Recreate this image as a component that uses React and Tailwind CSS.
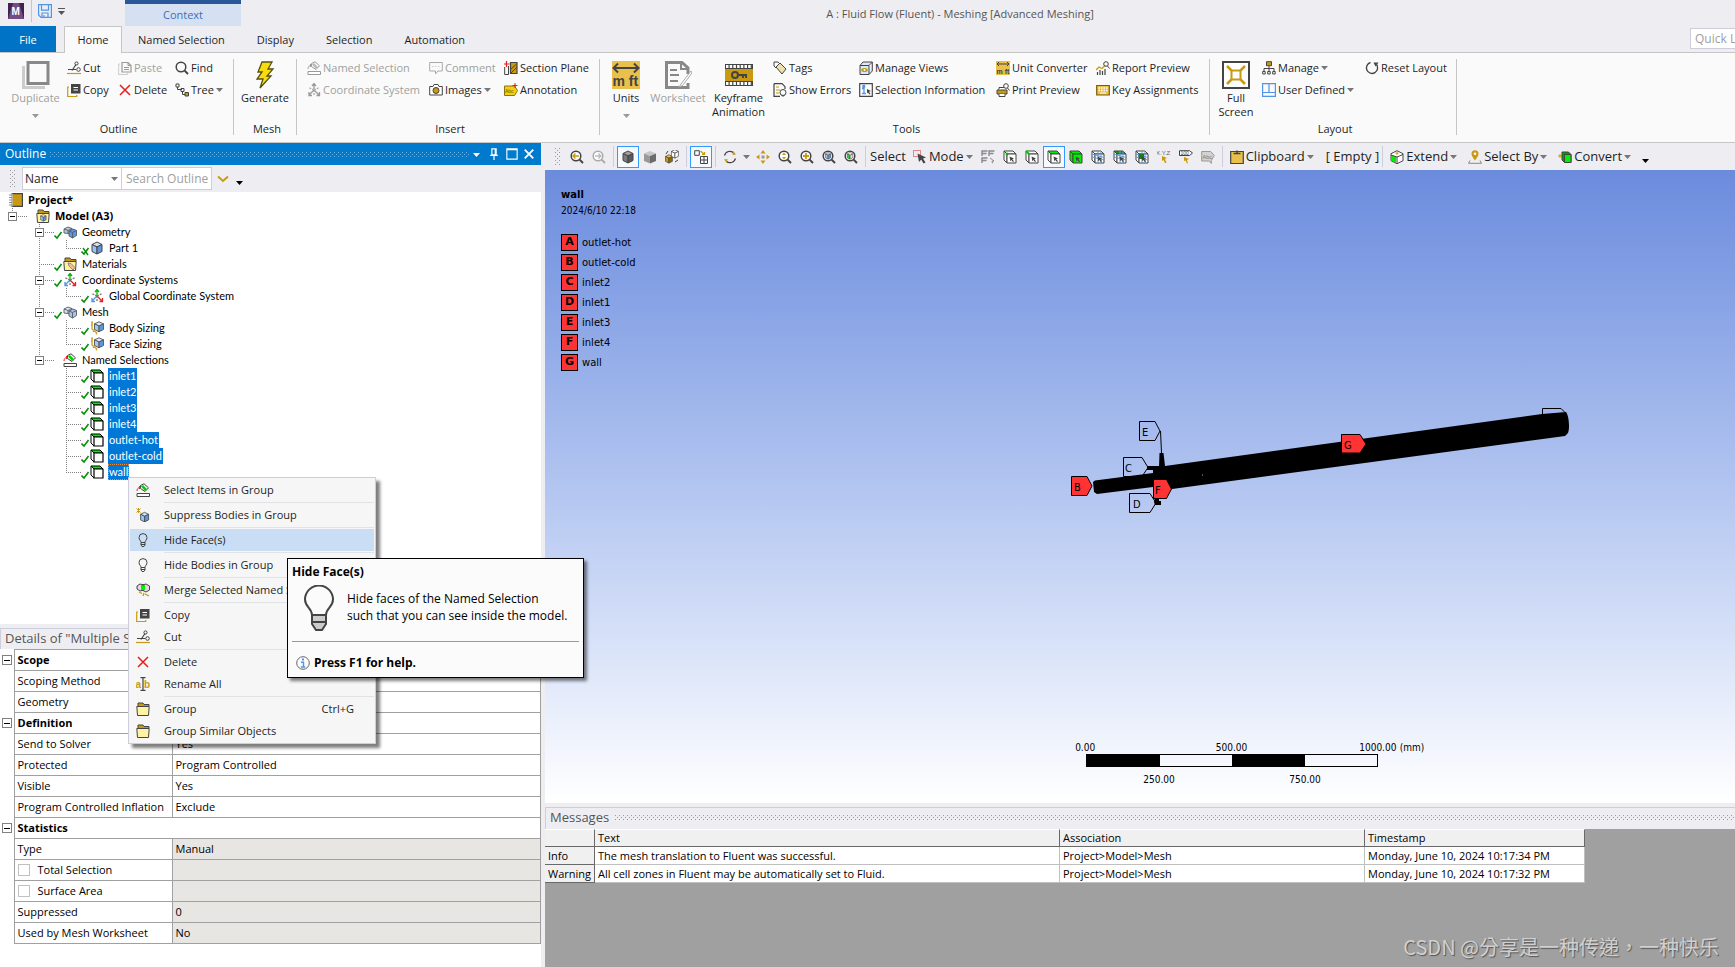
import React, { useId, useState } from "react";

const DARK = "#444444";
const GOLD = "#c99a11";
const BLUE = "#4f95e8";
const GREEN = "#00f000";

/* ---------- small drawing helpers ---------- */

const Svg = ({ size = 14, className = "", children }) => (
  <svg
    width={size}
    height={size}
    viewBox={`0 0 ${size > 20 ? 28 : 14} ${size > 20 ? 28 : 14}`}
    fill="none"
    className={`shrink-0 ${className}`}
    aria-hidden="true"
  >
    {children}
  </svg>
);

const Dots = ({ className = "", color = "#9a9a9e" }) => {
  const id = useId();
  return (
    <svg className={className} aria-hidden="true">
      <defs>
        <pattern id={id} width="4" height="4" patternUnits="userSpaceOnUse">
          <rect width="1" height="1" fill={color} />
          <rect x="2" y="2" width="1" height="1" fill={color} />
        </pattern>
      </defs>
      <rect width="100%" height="100%" fill={`url(#${id})`} />
    </svg>
  );
};

const Caret = ({ color = "#777777", className = "" }) => (
  <svg width="7" height="4" viewBox="0 0 7 4" className={`shrink-0 ${className}`} aria-hidden="true">
    <path d="M0 0h7L3.500 4z" fill={color} />
  </svg>
);

const Cube = ({ top = "#cfe0f7", left = "#9fc2ee", right = "#5b96e0" }) => (
  <g stroke={DARK} strokeWidth="1" strokeLinejoin="round">
    <path d="M7 1l5 2.500-5 2.500-5-2.500z" fill={top} />
    <path d="M2 3.500l5 2.500v7l-5-2.500z" fill={left} />
    <path d="M12 3.500l-5 2.500v7l5-2.500z" fill={right} />
  </g>
);

const TwoCubes = ({ a, b }) => (
  <g stroke="#555b66" strokeWidth="0.900" strokeLinejoin="round">
    <path d="M1 4l4-2 4 1.500v6L5 8.500 1 8z" fill={a} />
    <path d="M6 6l4-2 3.500 1.500v5L9.500 13 6 11z" fill={b} />
    <path d="M1 4l4 1.500V8.500M5 5.500L9 3.500M6 6l3.500 1.500V13M9.500 7.500l4-2" />
  </g>
);

// box used for vertex / edge / face / body filters
const Box = ({ top = "white", front = "white", left = "white", grid, children }) => (
  <g strokeLinejoin="round">
    <path d="M1 1h9l3 3H4z" fill={top} stroke={DARK} />
    <path d="M1 1v9l3 3V4z" fill={left} stroke={DARK} />
    <path d="M4 4h9v9H4z" fill={front} stroke={DARK} />
    {grid && <path d="M7 1v12M10 1v12M1 4l12 3.500M1 7l12 3" stroke="#5b96e0" />}
    {children}
  </g>
);

const Pointer = () => <path d="M6.500 6.500l4.500 2-1.700.8 1.700 2-1 .7-1.600-2-1 1.200z" fill={DARK} />;

const Magnifier = ({ color = DARK, children }) => (
  <>
    <circle cx="6" cy="6" r="4.800" stroke={color} strokeWidth="1.500" fill="white" />
    <path d="M9.600 9.600L13 13" stroke={color} strokeWidth="2" />
    {children}
  </>
);

const Axes = ({ up = "#00b400", left = "#4f95e8", right = "#e82020", other = "#777777" }) => (
  <g strokeWidth="1.300">
    <path d="M7 7V1M5 3l2-2.500L9 3" stroke={up} />
    <path d="M7 7l-5 5M2 9v3.500h3" stroke={left} />
    <path d="M7 7l5 5M12.500 9v3.500h-3" stroke={right} />
    <path d="M7 7v6M7 7L1.500 4.500M7 7l5.500-2.500" stroke={other} strokeDasharray="2 1" />
  </g>
);

const NamedSel = ({ fill = "#00d000", arrow = "#e82020", line = DARK }) => (
  <>
    <path d="M4.500 2.500L8 .8l4.500 4-3.500 3.700-4.500-3z" fill="white" stroke={line} />
    <path d="M5 3.500l4 4.500 2-2L7 2z" fill={fill} />
    <path d="M1 10.500h12.500v3H1z" fill="white" stroke={line} />
    <path d="M1 8c0-2 1-3.500 3-3.500M3 3l1.500 1.500L3 6" stroke={arrow} />
  </>
);

const Bulb = () => (
  <g stroke={DARK} strokeWidth="1">
    <path d="M5 9.500C5 7.500 3 7 3 4.600a4 4 0 018 0C11 7 9 7.500 9 9.500z" />
    <path d="M5 9.500h4v2.500l-1 1.500H6l-1-1.500zM5 11.500h4" />
  </g>
);

const FolderBase = ({ children }) => (
  <>
    <path d="M2 4V1h5l1 1.500h5V4" fill={GOLD} stroke={DARK} />
    <path d="M.8 4.500h12.400l-.7 9H1.500z" fill="#fff3a3" stroke={DARK} />
    {children}
  </>
);

const Sizing = () => (
  <>
    <path d="M1 1h2M1 4h2M2 1v7l5 4M4 9l-1 2M7 11.500l-1 2" stroke={GOLD} strokeWidth="1.200" />
    <g stroke="#555555" strokeWidth="0.900" strokeLinejoin="round">
      <path d="M9 .8l4.500 2L9 5 4.500 2.800z" fill="#dce8f8" />
      <path d="M4.500 2.800L9 5v5.800L4.500 8.500z" fill="#a6c8f0" />
      <path d="M13.500 2.800L9 5v5.800l4.500-2.300z" fill="#5b96e0" />
    </g>
  </>
);

const ICONS = {
  cut: (
    <>
      <path d="M1 8.500h8M5 9.500L9 3.500" stroke={DARK} strokeWidth="1.200" />
      <circle cx="9.500" cy="2.500" r="1.600" stroke={DARK} />
      <circle cx="11.500" cy="8.500" r="1.800" stroke={DARK} />
      <path d="M0 12.500h14" stroke={GOLD} strokeWidth="1.200" />
    </>
  ),
  copy: (
    <>
      <path d="M4 1h9.500v9.500H4z" fill={DARK} />
      <path d="M6.500 4.500h4.500M6.500 7h4.500" stroke="white" />
      <path d="M2 4H.7v9.500h9V12" stroke={GOLD} strokeWidth="1.200" />
    </>
  ),
  paste: (
    <>
      <path d="M4 1.500h6l3 3V11H4z" stroke="#999999" strokeWidth="1.200" />
      <path d="M10 1.500v3h3M6 6.500h5M6 8.500h5" stroke="#999999" />
      <path d="M2 3H.7v10.500h9V12" stroke="#cccccc" />
    </>
  ),
  delete: <path d="M2 2l10 10M12 2L2 12" stroke="#e81b1b" strokeWidth="1.500" />,
  find: (
    <>
      <circle cx="6" cy="6" r="4.800" stroke={DARK} strokeWidth="1.500" />
      <path d="M9.600 9.600L13 13" stroke={DARK} strokeWidth="2" />
    </>
  ),
  tree: (
    <>
      <path d="M1 1h3v3H1zM2.500 4v2.500H7M6 5.500h3v3H6zM7.500 8.500v3H10" stroke={DARK} />
      <path d="M10 9.500h3.500v3.500H10z" fill={GOLD} stroke={DARK} />
    </>
  ),
  namedSelGrey: <NamedSel fill="#bbbbbb" arrow="#999999" line="#999999" />,
  csGrey: <Axes up="#999999" left="#999999" right="#999999" other="#aaaaaa" />,
  comment: (
    <>
      <path d="M.7 1.500h12.600V10H9l-2.500 3v-3H.7z" stroke="#aaaaaa" />
      <path d="M3 5.500h8" stroke="#cccccc" strokeDasharray="1.500 1.500" />
    </>
  ),
  images: (
    <>
      <path d="M.7 3.500H4L5 1.500h4l1 2h3.300V12H.7z" fill="white" stroke={DARK} />
      <circle cx="7" cy="7.500" r="3" fill={GOLD} stroke={DARK} />
    </>
  ),
  section: (
    <>
      <path d="M6.500 1.500h6.500v11H6.500z" fill={GOLD} stroke={DARK} strokeWidth="1.200" />
      <path d="M7 8l5.500-5M7 12l6-6" stroke={DARK} />
      <path d="M4.500 5v8.500H.7V6" stroke={DARK} />
      <path d="M2.500 0v6M0 3h5.500" stroke="#e81b1b" strokeWidth="1.200" />
    </>
  ),
  annotation: (
    <>
      <path d="M.5 3h10l3 4.500-3 5H.5z" fill="#f2cf12" stroke="#8d7310" />
      <text x="1" y="10" fontSize="5" fill="#6b5709" fontFamily="Liberation Sans">Abc</text>
      <path d="M11 0v5M8.500 2.500h5" stroke="#e81b1b" />
    </>
  ),
  tags: (
    <>
      <path d="M1 1h4l2 2-4 4-2-2z" fill="white" stroke={DARK} />
      <path d="M3 6l4-4 6 6-4 5z" fill="#f0dfae" stroke={DARK} />
    </>
  ),
  errors: (
    <>
      <path d="M1 .7h8l3 3V6M7 13.300H1V.7" stroke={DARK} strokeWidth="1.200" />
      <path d="M3 4h3M3 7h4M3 10h3" stroke={GOLD} />
      <circle cx="10" cy="9.500" r="3" stroke={DARK} />
      <path d="M8.500 12l1.500 1.500 1.500-1.500" stroke={DARK} />
    </>
  ),
  views: (
    <>
      <path d="M1 4.500h9v9H1zM1 4.500l3-3.500h9.300L10 4.500M13.300 1v9L10 13.500" fill="#dbe8f8" stroke={DARK} />
      <ellipse cx="5.500" cy="9" rx="3.300" ry="2" fill={GOLD} />
      <circle cx="5.500" cy="9" r="1" fill="white" />
    </>
  ),
  selInfo: (
    <>
      <path d="M.7.7h12.600v12.600H.7z" fill="white" stroke={DARK} strokeWidth="1.200" />
      <path d="M3 5.500h2v5M3 10.500h4M4 2.500h1.500v1.500H4z" stroke={BLUE} strokeWidth="1.300" />
      <path d="M8 6l4 2-2 .7 1.500 2.300-1 .5L9 9.500 8 10.500z" fill={DARK} />
    </>
  ),
  unitConv: (
    <>
      <path d="M0 0h14v14H0z" fill="#e8c04a" />
      <path d="M1 3h12M3 1L1 3l2 2M11 1l2 2-2 2" stroke={DARK} />
      <text x="0.500" y="12.500" fontSize="7" fontWeight="700" fill={DARK} fontFamily="Liberation Sans">m ft</text>
    </>
  ),
  print: (
    <>
      <path d="M1 7h10v4H1z" fill={GOLD} stroke={DARK} />
      <path d="M3 7V4.500h5M3 11v2.500h6V11" fill="white" stroke={DARK} />
      <circle cx="10" cy="3" r="2.300" fill="white" stroke={DARK} />
      <path d="M11.500 5l2 2.500" stroke={DARK} />
    </>
  ),
  report: (
    <>
      <path d="M1.500 11v3M4 9v5M6.500 10v4M9 8v6" stroke={DARK} strokeWidth="1.200" />
      <path d="M0 9l3-3 3 1.500 3-3" stroke={GOLD} strokeWidth="1.300" />
      <circle cx="10" cy="3" r="2.300" stroke={DARK} />
      <path d="M11.500 5l2 2.500" stroke={DARK} />
    </>
  ),
  keys: (
    <>
      <path d="M.7 2.500h12.600v9.500H.7z" fill="#e8c04a" stroke="#7a5d08" strokeWidth="1.200" />
      <path d="M2.500 5h9M2.500 7.500h9" stroke="white" strokeWidth="1.300" strokeDasharray="1.500 1" />
      <path d="M4 10h6" stroke="white" />
    </>
  ),
  manage: (
    <>
      <path d="M4.500.7h5v4h-5z" fill={GOLD} stroke={DARK} />
      <path d="M7 5v5M2 10V7.500h10V10" stroke={DARK} />
      <path d="M.7 10.500h2.500V13H.7zM5.700 10.500h2.500V13H5.700zM10.700 10.500h2.500V13h-2.500z" stroke={DARK} />
    </>
  ),
  userDef: <path d="M.6.600h12.800v12.800H.6zM.6 9.500h12.800M7 .600v9M9 9.500" stroke={BLUE} strokeWidth="1.200" />,
  reset: (
    <>
      <path d="M5.500 1.500a5.600 5.600 0 106 2" stroke={DARK} strokeWidth="1.400" />
      <path d="M8.500 1.500l5 0-3 4z" fill={DARK} />
    </>
  ),
  project: (
    <>
      <path d="M3 .6h10.400v12.800H3z" fill={GOLD} stroke={DARK} strokeWidth="1.200" />
      <path d="M3 .6v12.800" stroke="white" />
      <path d="M0 2h3M0 4.500h3M0 7h3M0 9.500h3M0 12h3" stroke="#888888" />
    </>
  ),
  model: (
    <FolderBase>
      <g transform="translate(3.500 5) scale(.55)">
        <Cube />
      </g>
    </FolderBase>
  ),
  geometry: <TwoCubes a="#b9c9de" b="#5b96e0" />,
  part: <Cube />,
  materials: (
    <FolderBase>
      <path d="M5 6l3 .5 4 4-2 2.500-4-4z" fill="#f4bf8c" stroke="#777777" strokeWidth="0.800" />
    </FolderBase>
  ),
  cs: <Axes />,
  mesh: <TwoCubes a="#dbe6f4" b="#a9c4e4" />,
  sizing: <Sizing />,
  named: <NamedSel />,
  face: (
    <g strokeLinejoin="round">
      <path d="M1 1h9l3 3H4z" fill={GREEN} stroke="black" />
      <path d="M1 1v9l3 3" stroke="black" />
      <path d="M4 4h9v9H4z" fill="white" stroke="black" strokeWidth="1.200" />
    </g>
  ),
  suppress: (
    <>
      <path d="M.5.500l4 4M4.500.500l-4 4M2.500 0v5" stroke={GOLD} />
      <g transform="translate(3 3.500) scale(.8)">
        <Cube />
      </g>
    </>
  ),
  bulb: <Bulb />,
  merge: (
    <>
      <path d="M1 3l3-2 4 1v5L4 8 1 6zM6 2l4-1 3.500 2v4L10 9 6 7z" fill="#dddddd" stroke={DARK} />
      <path d="M5 3l4 0v4H5z" fill={GREEN} />
      <path d="M3 9l3 1.500M8 10l-1 3M9 11l4 2" stroke={GOLD} strokeWidth="1.300" />
    </>
  ),
  rename: (
    <>
      <path d="M7 .7v12.600M4.500.700h5M4.500 13.300h5" stroke={DARK} strokeWidth="1.200" />
      <text x="-0.500" y="10.500" fontSize="10" fontWeight="700" fill={GOLD} fontFamily="Liberation Sans">a</text>
      <text x="8" y="10.500" fontSize="10" fontWeight="700" fill={GOLD} fontFamily="Liberation Sans">b</text>
    </>
  ),
  folder: <FolderBase />,
  zoomPrev: (
    <Magnifier>
      <path d="M3 6h6M5.500 3.500L3 6l2.500 2.500" stroke={GOLD} strokeWidth="1.400" />
    </Magnifier>
  ),
  zoomNext: (
    <Magnifier color="#aaaaaa">
      <path d="M3 6h6M6.500 3.500L9 6 6.500 8.500" stroke="#bbbbbb" strokeWidth="1.400" />
    </Magnifier>
  ),
  shaded: <Cube top="#a0a0a0" left="#7b7b7b" right="#5a5a5a" />,
  shadedNoEdge: (
    <>
      <path d="M7 1l6 2.500L7 6 1 3.500z" fill="#c6c6c6" />
      <path d="M1 3.500L7 6v7.500L1 11z" fill="#999999" />
      <path d="M13 3.500L7 6v7.500l6-2.500z" fill="#6b6b6b" />
    </>
  ),
  bodyColor: (
    <>
      <g transform="translate(-1 4) scale(.7)">
        <Cube top="#e8c04a" left={GOLD} right="#8d6b0a" />
      </g>
      <g transform="translate(5 -1) scale(.7)">
        <Cube top="white" left="white" right="white" />
      </g>
      <path d="M1 4l2-3M10 12l3-2" stroke={DARK} />
    </>
  ),
  viewports: (
    <>
      <path d="M.7.700h4.600v4.600H.7zM6.500 6.500h7v7h-7zM10 6.500v7M6.500 10h7" stroke={DARK} />
      <path d="M6.500 1l4 3.500M10.500 2v2.500H8" stroke={GOLD} strokeWidth="1.200" />
    </>
  ),
  rotate: (
    <>
      <path d="M1.500 5.500A5.700 5.700 0 0111 3M12.500 8.500A5.700 5.700 0 013 11" stroke={DARK} strokeWidth="1.200" />
      <path d="M10 1l3 3.500-3.500.500zM4 13L1 9.500l3.500-.5z" fill={GOLD} />
    </>
  ),
  pan: (
    <>
      <path d="M7 0l2.500 3.500h-5zM7 14l2.500-3.500h-5zM0 7l3.500-2.500v5zM14 7l-3.500-2.500v5z" fill={GOLD} />
      <path d="M5.500 5.500h3v3h-3z" fill={DARK} opacity="0.500" />
    </>
  ),
  zoomUD: (
    <Magnifier>
      <path d="M6 2.500l2 2.500H4zM6 9.500l2-2.500H4z" fill={GOLD} />
    </Magnifier>
  ),
  zoomBox: (
    <Magnifier>
      <path d="M6 3v6M3 6h6" stroke={GOLD} strokeWidth="1.800" />
    </Magnifier>
  ),
  zoomFit: (
    <Magnifier>
      <g transform="translate(2.200 2) scale(.55)">
        <Cube />
      </g>
    </Magnifier>
  ),
  zoomSel: (
    <Magnifier>
      <g transform="translate(2.200 2) scale(.55)">
        <Cube top="white" left={GREEN} right="#dddddd" />
      </g>
    </Magnifier>
  ),
  mode: (
    <>
      <path d="M.5.500h7v6h-7z" stroke="#d42020" strokeDasharray="1 1" />
      <path d="M4.500 3.500l8.500 4-3 1 2.500 4-2 1-2.300-4L6 12z" fill={DARK} />
    </>
  ),
  filters: (
    <g stroke="#8a8a8a">
      <path d="M1 6V1h5.500M1 3.500h4.500M8 6V1h5.500M8 3.500h4.500M1 13V8h5.500M1 10.500h4.500" strokeWidth="1.400" />
      <path d="M9 8l4 3-2 .300.500 2" />
    </g>
  ),
  vertex: (
    <Box>
      <circle cx="4" cy="4" r="1.500" fill="#00b400" />
      <Pointer />
    </Box>
  ),
  edge: (
    <Box>
      <path d="M1 1l3 3" stroke="#00c800" strokeWidth="2" />
      <Pointer />
    </Box>
  ),
  faceSel: (
    <Box top={GREEN}>
      <Pointer />
    </Box>
  ),
  bodySel: (
    <Box top={GREEN} front={GREEN} left={GREEN}>
      <Pointer />
    </Box>
  ),
  nodeSel: (
    <Box grid>
      <Pointer />
    </Box>
  ),
  elemFace: (
    <Box grid top="#1e9a1e">
      <Pointer />
    </Box>
  ),
  elem: (
    <Box grid>
      <path d="M4 4h5v5H4z" fill="#1e7a1e" />
      <Pointer />
    </Box>
  ),
  xyz: (
    <>
      <text x="-1" y="5" fontSize="6" fill="#666666" fontFamily="Liberation Sans">X.Y.Z</text>
      <path d="M5 6l5 2-2 1 1.500 4h-1.500L6.500 10 5 11z" fill={GOLD} />
    </>
  ),
  probe: (
    <>
      <path d="M.5.700h10L13.500 3l-3 2.500H.5z" fill="white" stroke={DARK} />
      <text x="1.500" y="5" fontSize="5" fill={DARK} fontFamily="Liberation Sans">100</text>
      <path d="M5 7l5 2-2 1 1 3.500H8L6.500 10.500 5 11z" fill={GOLD} />
    </>
  ),
  label: (
    <>
      <path d="M.7 1.500h9l3.600 4-3 5v3l-2-2.500H.7z" fill="#d2d2d2" stroke="#999999" />
      <text x="1.500" y="8.500" fontSize="5.500" fill="#777777" fontFamily="Liberation Sans">Abc</text>
    </>
  ),
  clipboard: (
    <>
      <path d="M.7 1.500h12.600v12H.7z" fill="#e8c04a" stroke={DARK} strokeWidth="1.200" />
      <path d="M3.500 3.500h7M7 .5v3" stroke={DARK} strokeWidth="1.500" />
    </>
  ),
  extend: (
    <>
      <path d="M7 .7l6 3v7l-6 3-6-3v-7z" fill="white" stroke={DARK} />
      <path d="M1 5l5 2v6l-5-2.500z" fill={GREEN} />
      <path d="M1 5l6 2 6-2.500M7 7v6.500" stroke={DARK} />
      <path d="M7 1.500v3.500M5.300 3.200h3.400" stroke={GOLD} />
    </>
  ),
  selectBy: (
    <>
      <path d="M7 .3a3.500 3.500 0 013.500 3.500C10.500 6.500 7 10.500 7 10.500S3.500 6.500 3.500 3.800A3.500 3.500 0 017 .3z" fill={GOLD} />
      <circle cx="7" cy="3.800" r="1.300" fill="white" />
      <path d="M2 10.500l-1.500 2.800h13L12 10.500" stroke="#888888" />
    </>
  ),
  convert: (
    <>
      <path d="M0 6h4M2 4v4" stroke={GOLD} />
      <path d="M4 2h6.500L13 4.500v8H6.500L4 10z" fill="#00a000" stroke={DARK} />
      <path d="M6.500 4.500H13v8H6.500z" fill={GREEN} stroke={DARK} />
    </>
  ),
};

const BIG_ICONS = {
  duplicate: (
    <>
      <path d="M6 1.500h20v21H6z" stroke="#888888" strokeWidth="3" />
      <path d="M1.500 5v21.500H23" stroke="#cccccc" strokeWidth="3" />
    </>
  ),
  generate: (
    <path d="M11 1h10l-4 7h5l-6 7h4L9 27l3-9H6l5-7H7z" fill="#f8dc10" stroke="#55500f" strokeWidth="1.300" />
  ),
  units: (
    <>
      <path d="M0 0h28v28H0z" fill="#e8c04a" />
      <path d="M1.500 7h25M6 2.500L1.500 7 6 11.500M22 2.500L26.500 7 22 11.500" stroke={DARK} strokeWidth="2" />
      <text x="0.500" y="24.500" fontSize="14" fontWeight="700" fill={DARK} fontFamily="Liberation Sans">m ft</text>
    </>
  ),
  worksheet: (
    <>
      <path d="M24 13V7l-6-5.500H2.500v25H24V22" stroke="#888888" strokeWidth="3" />
      <path d="M17 2v6h6" stroke="#888888" strokeWidth="2" />
      <path d="M6 9h7M6 14h9M6 20h8" stroke="#888888" strokeWidth="2" />
      <path d="M27 10L17 23l-2 3 3.500-1.500L28 12z" fill="white" stroke="#aaaaaa" />
    </>
  ),
  keyframe: (
    <>
      <path d="M0 3h28v22H0z" fill={DARK} />
      <path d="M0 8h28v12H0z" fill={GOLD} />
      <path d="M1 5.500h26M1 22.500h26" stroke="white" strokeWidth="3" strokeDasharray="2.500 1.200" />
      <circle cx="10" cy="14" r="3" stroke={DARK} strokeWidth="2" />
      <path d="M13 14h9M18 14v3M21 14v3" stroke={DARK} strokeWidth="2" />
    </>
  ),
  fullScreen: (
    <>
      <path d="M1 1h26v26H1z" fill="white" stroke={DARK} strokeWidth="2" />
      <path d="M9.500 9.500h9v9h-9z" stroke={GOLD} strokeWidth="2" />
      <path d="M9.500 9.500L5 5M18.500 9.500L23 5M9.500 18.500L5 23M18.500 18.500L23 23" stroke={GOLD} strokeWidth="2.500" />
    </>
  ),
};

const Icon = ({ name, className }) => <Svg className={className}>{ICONS[name]}</Svg>;

/* ---------- ribbon ---------- */

const RIBBON = [
  {
    label: "Outline",
    grid: "pl-1 grid-cols-[63px_51px_57px_58px]",
    columns: [
      { big: "duplicate", text: "Duplicate", menu: true, disabled: true },
      [["cut", "Cut"], ["copy", "Copy"]],
      [["paste", "Paste", "disabled"], ["delete", "Delete"]],
      [["find", "Find"], ["tree", "Tree", "menu"]],
    ],
  },
  {
    label: "Mesh",
    grid: "grid-cols-[62px]",
    columns: [{ big: "generate", text: "Generate" }],
  },
  {
    label: "Insert",
    grid: "pl-[10px] grid-cols-[122px_75px_95px]",
    columns: [
      [["namedSelGrey", "Named Selection", "disabled"], ["csGrey", "Coordinate System", "disabled"]],
      [["comment", "Comment", "disabled"], ["images", "Images", "menu"]],
      [["section", "Section Plane"], ["annotation", "Annotation"]],
    ],
  },
  {
    label: "Tools",
    grid: "grid-cols-[52px_52px_69px_86px_137px_100px_113px]",
    columns: [
      { big: "units", text: "Units", menu: true },
      { big: "worksheet", text: "Worksheet", disabled: true },
      { big: "keyframe", text: "Keyframe Animation" },
      [["tags", "Tags"], ["errors", "Show Errors"]],
      [["views", "Manage Views"], ["selInfo", "Selection Information"]],
      [["unitConv", "Unit Converter"], ["print", "Print Preview"]],
      [["report", "Report Preview"], ["keys", "Key Assignments"]],
    ],
  },
  {
    label: "Layout",
    grid: "grid-cols-[52px_103px_91px]",
    columns: [
      { big: "fullScreen", text: "Full Screen" },
      [["manage", "Manage", "menu"], ["userDef", "User Defined", "menu"]],
      [["reset", "Reset Layout"]],
    ],
  },
];

const BigButton = ({ big, text, menu, disabled }) => (
  <button
    disabled={disabled}
    className={`flex flex-col items-center pt-1 text-center leading-[14px] ${disabled ? "text-[#a0a0a0]" : ""}`}
  >
    <Svg size={28} className="mb-0.5">{BIG_ICONS[big]}</Svg>
    {text}
    {menu && <Caret className="mt-[9px]" color="#999999" />}
  </button>
);

const SmallButton = ({ item: [icon, text, flag] }) => (
  <button
    disabled={flag === "disabled"}
    className={`flex h-[22px] items-center gap-0.5 whitespace-nowrap ${flag === "disabled" ? "text-[#a0a0a0]" : ""}`}
  >
    <Icon name={icon} />
    {text}
    {flag === "menu" && <Caret />}
  </button>
);

const Ribbon = () => (
  <div className="flex border-y border-[#c6c6c6] bg-[#fafafa] pt-1 pb-[5px] text-[11px]">
    {RIBBON.map((group) => (
      <div key={group.label} className="flex">
        <div className="flex h-20 flex-col">
          <div className={`grid flex-1 ${group.grid}`}>
            {group.columns.map((col, i) =>
              Array.isArray(col) ? (
                <div key={i} className="flex flex-col items-start">
                  {col.map((item) => (
                    <SmallButton key={item[1]} item={item} />
                  ))}
                </div>
              ) : (
                <div key={i} className="flex items-start justify-center">
                  <BigButton {...col} />
                </div>
              )
            )}
          </div>
          <div className="pl-1 text-center leading-4">{group.label}</div>
        </div>
        <div className="my-0.5 w-px bg-[#c6c6c6]" />
      </div>
    ))}
  </div>
);

const TitleBar = () => (
  <>
    <header className="relative flex h-[26px] items-start">
      <div className="flex h-full items-center pb-1 pl-2">
        <svg width="16" height="16" viewBox="0 0 16 16" aria-hidden="true">
          <path d="M0 0h16v16H0z" fill="#3f2350" />
          <path d="M5 0h6l5 16H0z" fill="#754b86" />
          <text x="3.500" y="11.500" fontSize="10" fontWeight="700" fill="white" fontFamily="Liberation Sans">M</text>
        </svg>
        <div className="ml-[7px] h-[22px] w-px bg-[#c6c6cc]" />
        <button aria-label="Save" className="ml-1.5">
          <Svg>
            <path d="M.6.600h12.800v12.800H3L.6 11zM3.500.600v5.500h7V.600M4 13v-4h6v4M6 11v2" stroke={BLUE} strokeWidth="1.200" />
          </Svg>
        </button>
        <button aria-label="Customize" className="ml-1.5 flex flex-col items-center gap-0.5">
          <span className="h-px w-[7px] bg-[#555555]" />
          <Caret color="#555555" />
        </button>
      </div>
      <div className="ml-[60px] h-full w-[116px] border-t-4 border-[#2b579a] bg-[#d5e1f3] text-center text-[11px] leading-[22px] text-[#3f6fb5]">
        Context
      </div>
      <h1 className="absolute inset-x-0 top-0.5 pl-[185px] text-center text-[11px] leading-6 text-[#555555]">
        A : Fluid Flow (Fluent) - Meshing [Advanced Meshing]
      </h1>
    </header>
    <nav className="relative z-10 -mb-px flex h-[27px] items-stretch text-[11px]">
      <button className="mr-2 mb-px w-14 bg-[#0173c7] pt-0.5 text-white">File</button>
      <button className="w-[58px] border border-b-0 border-[#c6c6c6] bg-[#fafafa]">Home</button>
      {["Named Selection", "Display", "Selection", "Automation"].map((tab) => (
        <button key={tab} className="px-4 pt-px">{tab}</button>
      ))}
      <input
        aria-label="Quick Launch"
        placeholder="Quick Launch"
        className="mt-0.5 ml-auto h-[21px] w-[45px] border border-r-0 border-[#ccceDB] bg-white pl-1 text-xs placeholder:text-[#a0a0a0]"
      />
    </nav>
  </>
);

/* ---------- outline tree ---------- */

// guides: "|" line, "T" branch, "L" last branch, "E" open node, "e" last open node
const TREE = [
  { guides: "", icon: "project", text: "Project*", bold: true },
  { guides: "e", icon: "model", text: "Model (A3)", bold: true },
  { guides: " E", icon: "geometry", text: "Geometry", mark: "check" },
  { guides: " |L", icon: "part", text: "Part 1", mark: "cross" },
  { guides: " T", icon: "materials", text: "Materials", mark: "check" },
  { guides: " E", icon: "cs", text: "Coordinate Systems", mark: "check" },
  { guides: " |L", icon: "cs", text: "Global Coordinate System", mark: "check" },
  { guides: " E", icon: "mesh", text: "Mesh", mark: "check" },
  { guides: " |T", icon: "sizing", text: "Body Sizing", mark: "check" },
  { guides: " |L", icon: "sizing", text: "Face Sizing", mark: "check" },
  { guides: " e", icon: "named", text: "Named Selections" },
  { guides: "  T", icon: "face", text: "inlet1", mark: "check", selected: true },
  { guides: "  T", icon: "face", text: "inlet2", mark: "check", selected: true },
  { guides: "  T", icon: "face", text: "inlet3", mark: "check", selected: true },
  { guides: "  T", icon: "face", text: "inlet4", mark: "check", selected: true },
  { guides: "  T", icon: "face", text: "outlet-hot", mark: "check", selected: true },
  { guides: "  T", icon: "face", text: "outlet-cold", mark: "check", selected: true },
  { guides: "  L", icon: "face", text: "wall", mark: "check", selected: true, focused: true },
];

const GUIDE_PATHS = {
  "|": "M12.500 0v16",
  T: "M12.500 0v16M12 8.500h15",
  L: "M12.500 0v8M12 8.500h15",
  E: "M12.500 0v16M12 8.500h15",
  e: "M12.500 0v8M12 8.500h15",
};

const Guide = ({ type }) => (
  <svg width="27" height="16" viewBox="0 0 27 16" className="shrink-0" aria-hidden="true">
    {GUIDE_PATHS[type] && <path d={GUIDE_PATHS[type]} stroke="#808080" strokeDasharray="1 1" />}
    {(type === "E" || type === "e") && (
      <>
        <rect x="8.500" y="4.500" width="8" height="8" fill="white" stroke="#808080" />
        <path d="M10 8.500h5" stroke="black" />
      </>
    )}
  </svg>
);

const Mark = ({ type }) => (
  <svg width="9" height="16" viewBox="0 0 9 16" className="shrink-0" aria-hidden="true">
    {type && <path d="M.5 11.500L3 14 7.500 8" fill="none" stroke="#0a8f0a" strokeWidth="1.600" />}
    {type === "cross" && <path d="M2 8l5 7" stroke="#0a8f0a" strokeWidth="1.400" />}
  </svg>
);

const TreeRow = ({ node }) => (
  <li className="flex h-4 items-center">
    {[...node.guides].map((g, i) => (
      <Guide key={i} type={g} />
    ))}
    <Mark type={node.mark} />
    <Icon name={node.icon} />
    <span
      className={`ml-1 px-px leading-4 whitespace-nowrap ${
        node.bold ? "font-['Open_Sans',sans-serif] font-bold text-black" : ""
      } ${node.selected ? "bg-[#0078d7] text-white" : ""} ${
        node.focused ? "outline outline-1 -outline-offset-1 outline-dotted outline-[#f08a30]" : ""
      }`}
    >
      {node.text}
    </span>
  </li>
);

const OutlinePanel = () => (
  <section className="flex min-h-0 flex-1 flex-col">
    <div className="flex h-[22px] shrink-0 items-center bg-[#007acc] px-[5px] text-white">
      <h2 className="mr-1 text-xs">Outline</h2>
      <Dots className="h-[5px] flex-1" color="#6fb4e6" />
      <div className="flex items-center gap-1 pr-0.5 pl-1">
        <Caret color="white" className="mt-0.5 mr-1" />
        <Svg size={12}>
          <path d="M4.500 1h5v7h-5zM8.500 1v7M2.500 8.500h9M7 8.500V14" stroke="white" strokeWidth="1.400" />
        </Svg>
        <Svg size={12} className="ml-0.5">
          <path d="M1 1h12v12H1zM1 2h12" stroke="white" strokeWidth="1.300" />
        </Svg>
        <Svg size={10} className="ml-0.5">
          <path d="M1 1l12 12M13 1L1 13" stroke="white" strokeWidth="2.500" />
        </Svg>
      </div>
    </div>
    <div className="flex h-[27px] shrink-0 items-center pl-[10px] text-xs">
      <Dots className="mr-[7px] h-[17px] w-[5px]" />
      <div className="relative">
        <select
          aria-label="Search by"
          className="block h-[23px] w-[100px] appearance-none border border-[#ccceDB] bg-white pl-0.5"
        >
          <option>Name</option>
        </select>
        <Caret className="pointer-events-none absolute top-[10px] right-1" />
      </div>
      <input
        aria-label="Search Outline"
        placeholder="Search Outline"
        className="h-[23px] w-[90px] border border-l-0 border-[#ccceDB] bg-white pl-1 placeholder:text-[#a0a0a0]"
      />
      <button aria-label="Expand" className="ml-1">
        <Svg>
          <path d="M2 4.500l5 4.500 5-4.500" stroke={GOLD} strokeWidth="2" />
        </Svg>
      </button>
      <Caret color="black" className="mt-2 ml-1.5" />
    </div>
    <ul className="min-h-0 flex-1 overflow-hidden bg-white font-['Lato',sans-serif] text-[11px] text-black">
      {TREE.map((node) => (
        <TreeRow key={node.text} node={node} />
      ))}
    </ul>
  </section>
);

/* ---------- details ---------- */

const DETAILS = [
  { group: "Scope" },
  { name: "Scoping Method", value: "" },
  { name: "Geometry", value: "" },
  { group: "Definition" },
  { name: "Send to Solver", value: "Yes" },
  { name: "Protected", value: "Program Controlled" },
  { name: "Visible", value: "Yes" },
  { name: "Program Controlled Inflation", value: "Exclude" },
  { group: "Statistics" },
  { name: "Type", value: "Manual", readOnly: true },
  { name: "Total Selection", value: "", readOnly: true, check: true },
  { name: "Surface Area", value: "", readOnly: true, check: true },
  { name: "Suppressed", value: "0", readOnly: true },
  { name: "Used by Mesh Worksheet", value: "No", readOnly: true },
];

const DetailRow = ({ row }) => {
  if (row.group) {
    return (
      <tr className="h-[21px]">
        <td className="p-0">
          <button aria-label={`Collapse ${row.group}`} className="ml-0.5 flex size-[10px] items-center justify-center border border-[#808080]">
            <span className="h-px w-1.5 bg-black" />
          </button>
        </td>
        <th colSpan={2} className="border border-[#a0a0a0] p-0 pl-[3px] text-left font-bold">
          {row.group}
        </th>
      </tr>
    );
  }
  return (
    <tr className="h-[21px]">
      <td className="p-0" />
      <td className="border border-[#a0a0a0] p-0 pl-[3px] whitespace-nowrap">
        {row.check ? (
          <label className="flex items-center gap-2">
            <input type="checkbox" className="size-3 appearance-none border border-[#c0c0c0] bg-white" />
            {row.name}
          </label>
        ) : (
          row.name
        )}
      </td>
      <td className={`border border-[#a0a0a0] p-0 pl-[3px] ${row.readOnly ? "bg-[#e8e6e3]" : ""}`}>{row.value}</td>
    </tr>
  );
};

const DetailsPanel = () => (
  <section className="mt-1 shrink-0">
    <h2 className="h-[22px] border-t border-l border-[#ccceDB] pl-1 text-[13px] leading-[19px] text-[#555555]">
      Details of "Multiple Selection"
    </h2>
    <div className="-mt-px bg-white pb-[23px] text-[11px] leading-4 text-black">
      <table className="w-full table-fixed border-collapse">
        <colgroup>
          <col className="w-[14px]" />
          <col className="w-[158px]" />
          <col />
        </colgroup>
        <tbody>
          {DETAILS.map((row) => (
            <DetailRow key={row.group || row.name} row={row} />
          ))}
        </tbody>
      </table>
    </div>
  </section>
);

/* ---------- context menu ---------- */

const MENU = [
  { icon: "named", text: "Select Items in Group" },
  null,
  { icon: "suppress", text: "Suppress Bodies in Group" },
  null,
  { icon: "bulb", text: "Hide Face(s)" },
  null,
  { icon: "bulb", text: "Hide Bodies in Group" },
  null,
  { icon: "merge", text: "Merge Selected Named Selections" },
  null,
  { icon: "copy", text: "Copy" },
  { icon: "cut", text: "Cut" },
  null,
  { icon: "delete", text: "Delete" },
  { icon: "rename", text: "Rename All" },
  null,
  { icon: "folder", text: "Group", shortcut: "Ctrl+G" },
  { icon: "folder", text: "Group Similar Objects" },
];

const ContextMenu = () => {
  const [active, setActive] = useState("Hide Face(s)");
  return (
    <div className="absolute top-[334px] left-32 z-20 w-[248px] border border-[#ccceDB] bg-[#f6f6f6] p-px text-[11px] shadow-[4px_4px_3px_rgba(0,0,0,0.5)]">
      {MENU.map((item, i) =>
        item ? (
          <button
            key={item.text}
            onMouseEnter={() => setActive(item.text)}
            className={`flex h-[22px] w-full items-center pl-[6px] text-left whitespace-nowrap ${
              active === item.text ? "bg-[#c9def5]" : ""
            }`}
          >
            <Icon name={item.icon} />
            <span className="ml-[14px]">{item.text}</span>
            {item.shortcut && <span className="mr-5 ml-auto">{item.shortcut}</span>}
          </button>
        ) : (
          <div key={i} className="ml-[34px] py-px">
            <div className="h-px bg-[#e0e3e6]" />
          </div>
        )
      )}
    </div>
  );
};

const Tooltip = () => (
  <div
    role="tooltip"
    className="absolute top-[415px] left-[287px] z-30 w-[297px] border border-black bg-[#fbfbfb] px-1 pb-1.5 text-xs text-black shadow-[3px_3px_3px_rgba(0,0,0,0.5)]"
  >
    <p className="leading-[26px] font-bold">Hide Face(s)</p>
    <div className="flex h-12 items-start">
      <svg width="32" height="47" viewBox="0 0 32 47" fill="none" className="mr-[12px] ml-[11px] shrink-0" aria-hidden="true">
        <path d="M9 30c0-7-7-8-7-15.500a14 14 0 0128 0C30 22 23 23 23 30z" stroke={DARK} strokeWidth="2" />
        <path d="M9 30h14v9l-4 6h-6l-4-6z" fill="#cccccc" stroke={DARK} strokeWidth="2" />
        <path d="M9 37h14" stroke={DARK} strokeWidth="2" />
      </svg>
      <p className="pt-[5px] leading-[17px] whitespace-nowrap">
        Hide faces of the Named Selection
        <br />
        such that you can see inside the model.
      </p>
    </div>
    <div className="mt-2 mb-[13px] h-px bg-[#999999]" />
    <p className="flex items-center gap-1 pl-1 leading-4 font-bold">
      <Svg>
        <circle cx="7" cy="7" r="6.300" stroke="#666666" />
        <path d="M6 2.500h2v2H6z" fill={BLUE} />
        <path d="M5 6.200h2.500v4.500M4.800 11h4.500" stroke={BLUE} strokeWidth="1.400" />
      </Svg>
      Press F1 for help.
    </p>
  </div>
);

/* ---------- graphics toolbar ---------- */

const TOOLBAR = [
  [{ icon: "zoomPrev" }, { icon: "zoomNext" }],
  [{ icon: "shaded", active: true }, { icon: "shadedNoEdge" }, { icon: "bodyColor" }],
  [{ icon: "viewports", active: true }],
  [
    { icon: "rotate", menu: true },
    { icon: "pan" },
    { icon: "zoomUD" },
    { icon: "zoomBox" },
    { icon: "zoomFit" },
    { icon: "zoomSel" },
  ],
];

const FILTERS = [
  { icon: "filters" },
  { icon: "vertex" },
  { icon: "edge" },
  { icon: "faceSel", active: true },
  { icon: "bodySel" },
  { icon: "nodeSel" },
  { icon: "elemFace" },
  { icon: "elem" },
  { icon: "xyz" },
  { icon: "probe" },
  { icon: "label" },
];

const ToolButton = ({ icon, active, menu }) => (
  <>
    <button
      aria-label={icon}
      className={`flex size-[22px] shrink-0 items-center justify-center border ${
        active ? "border-[#3399ff] bg-[#f6f9fd]" : "border-transparent"
      }`}
    >
      <Icon name={icon} />
    </button>
    {menu && <Caret className="mx-0.5" />}
  </>
);

const TextButton = ({ icon, children }) => (
  <button className="flex items-center gap-0.5 whitespace-nowrap">
    {icon && <Icon name={icon} />}
    {children}
    <Caret />
  </button>
);

const Divider = () => <div className="mx-[3px] h-[21px] w-px shrink-0 bg-[#ccceDB]" />;

const GraphicsToolbar = () => (
  <div className="flex h-[27px] shrink-0 items-center overflow-hidden pl-[10px] text-[13px]">
    <Dots className="mr-1.5 h-[17px] w-[5px]" />
    {TOOLBAR.map((group, i) => (
      <React.Fragment key={i}>
        {i > 0 && <Divider />}
        {group.map((tool) => (
          <ToolButton key={tool.icon} {...tool} />
        ))}
      </React.Fragment>
    ))}
    <Divider />
    <div className="mr-1 ml-px flex items-center gap-[7px]">
      <span>Select</span>
      <TextButton icon="mode">Mode</TextButton>
    </div>
    {FILTERS.map((tool) => (
      <ToolButton key={tool.icon} {...tool} />
    ))}
    <Divider />
    <div className="flex items-center gap-3 pl-1">
      <TextButton icon="clipboard">Clipboard</TextButton>
      <span className="whitespace-nowrap">[ Empty ]</span>
    </div>
    <Divider />
    <div className="flex items-center gap-[11px] pl-1">
      <TextButton icon="extend">Extend</TextButton>
      <TextButton icon="selectBy">Select By</TextButton>
      <TextButton icon="convert">Convert</TextButton>
      <Caret color="black" className="mt-2" />
    </div>
  </div>
);

/* ---------- viewport ---------- */

const LEGEND = [
  ["A", "outlet-hot"],
  ["B", "outlet-cold"],
  ["C", "inlet2"],
  ["D", "inlet1"],
  ["E", "inlet3"],
  ["F", "inlet4"],
  ["G", "wall"],
];

const FlowModel = () => (
  <svg
    width="520"
    height="120"
    viewBox="1060 400 520 120"
    fill="none"
    className="absolute top-[230px] left-[515px] font-['DejaVu_Sans_Condensed','DejaVu_Sans',sans-serif] text-[11px]"
  >
    <path d="M1542.500 414v-5.500H1561l4.500 4.500" stroke="black" />
    <path d="M1139.500 421.500h15.500l5 9.500-5 9.500h-15.500zM1123.500 457.500H1142l6 10-6 9h-18.500zM1129.500 493.500h20.500l6 9.500-6 9.500h-20.500z" stroke="black" />
    <path d="M1160.500 431l1 22" stroke="black" />
    <path
      d="M1093 482l2-1.500 58-7.500v-3l6-2.500.5-14.500h4l1.500 13L1542 414l24-2c3 4 4 16 2 21l-3 3-393 53-19-2-56 7-3-2z"
      fill="black"
    />
    <path d="M1147 466h12v4h-12zM1155 498h4v3h2v4h-6l-1-3z" fill="black" />
    <path
      d="M1071.500 476.500h15.500l5 9.500-5 9.500h-15.500zM1341.500 434.500H1360l6 9.500-6 9h-18.500zM1153.500 479.500h13l5 9.500-5 9.500h-13z"
      fill="#ff3333"
      stroke="black"
    />
    <g fill="black">
      <text x="1074" y="491">B</text>
      <text x="1125" y="472">C</text>
      <text x="1133" y="508">D</text>
      <text x="1142" y="436">E</text>
      <text x="1155" y="494">F</text>
      <text x="1344" y="449">G</text>
    </g>
    <path d="M1202 475h1" stroke="#8fa8e0" />
  </svg>
);

const Ruler = () => (
  <div className="absolute top-[571px] left-[541px] w-[292px] font-['DejaVu_Sans_Condensed','DejaVu_Sans',sans-serif] text-[10px] leading-[14px] text-black">
    <div className="-mx-[73px] -mb-px -ml-[74px] grid grid-cols-3 text-center">
      <span>0.00</span>
      <span>500.00</span>
      <span className="relative">
        1000.00 <span className="absolute right-0 left-[95px] text-left">(mm)</span>
      </span>
    </div>
    <div className="grid h-[13px] grid-cols-4 border border-black">
      <div className="bg-black" />
      <div />
      <div className="bg-black" />
      <div />
    </div>
    <div className="mt-1.5 grid grid-cols-2 text-center">
      <span>250.00</span>
      <span>750.00</span>
    </div>
  </div>
);

const Viewport = () => (
  <div className="relative min-h-0 flex-1 overflow-hidden bg-linear-to-b from-[#6b8bdd] to-white font-['DejaVu_Sans',sans-serif] text-[10px] text-black">
    <div className="pt-[17px] pl-4">
      <p className="leading-4 font-bold">wall</p>
      <p className="font-['DejaVu_Sans_Condensed','DejaVu_Sans',sans-serif] leading-4">2024/6/10 22:18</p>
      <ul className="mt-[15px] space-y-[3px]">
        {LEGEND.map(([key, name]) => (
          <li key={key} className="flex items-center gap-1">
            <span className="flex size-[17px] items-center justify-center border border-black bg-[#ff3333] text-[11px] font-bold">
              {key}
            </span>
            {name}
          </li>
        ))}
      </ul>
    </div>
    <FlowModel />
    <Ruler />
  </div>
);

/* ---------- messages ---------- */

const MESSAGES = [
  ["Info", "The mesh translation to Fluent was successful.", "Project>Model>Mesh", "Monday, June 10, 2024 10:17:34 PM"],
  ["Warning", "All cell zones in Fluent may be automatically set to Fluid.", "Project>Model>Mesh", "Monday, June 10, 2024 10:17:32 PM"],
];

const MessagesPanel = () => (
  <section className="mt-1 flex h-40 shrink-0 flex-col">
    <div className="flex h-[22px] shrink-0 items-center border-t border-l border-[#ccceDB] pb-0.5 pl-1">
      <h2 className="mr-1.5 text-[13px] leading-[19px] text-[#555555]">Messages</h2>
      <Dots className="h-[5px] flex-1" />
    </div>
    <div className="relative flex-1 bg-[#a0a0a0]">
      <table className="w-[1040px] table-fixed border-separate border-spacing-0 text-[11px] leading-4 text-black">
        <colgroup>
          <col className="w-[50px]" />
          <col className="w-[465px]" />
          <col className="w-[305px]" />
          <col className="w-[220px]" />
        </colgroup>
        <thead>
          <tr className="h-[18px]">
            {["", "Text", "Association", "Timestamp"].map((head) => (
              <th
                key={head}
                className="border-t border-r border-b border-t-white border-r-[#696969] border-b-[#696969] bg-[#f0f0f0] p-0 pl-[3px] text-left font-normal"
              >
                {head}
              </th>
            ))}
          </tr>
        </thead>
        <tbody>
          {MESSAGES.map(([kind, ...cells]) => (
            <tr key={kind} className="h-[18px]">
              <th className="overflow-hidden border-r border-b border-[#696969] bg-[#f0f0f0] p-0 pl-[3px] text-left font-normal">
                {kind}
              </th>
              {cells.map((cell) => (
                <td key={cell} className="border-r border-b border-[#c0c0c0] bg-white p-0 pl-[3px] whitespace-nowrap">
                  {cell}
                </td>
              ))}
            </tr>
          ))}
        </tbody>
      </table>
      <p
        lang="zh-Hant"
        className="absolute right-4 bottom-1.5 font-['Noto_Sans_CJK_TC','Noto_Sans_CJK_SC',sans-serif] text-[20px] leading-7 text-[#d0d0d0] [text-shadow:1px_1px_1px_#555555]"
      >
        CSDN @分享是一种传递，一种快乐
      </p>
    </div>
  </section>
);

export default function App() {
  return (
    <div className="flex h-screen flex-col overflow-hidden bg-[#eeeef2] font-['Open_Sans','Noto_Sans',sans-serif] text-[#1e1e1e]">
      <TitleBar />
      <Ribbon />
      <main className="relative flex min-h-0 flex-1 gap-1">
        <div className="flex w-[541px] shrink-0 flex-col">
          <OutlinePanel />
          <DetailsPanel />
        </div>
        <div className="flex min-w-0 flex-1 flex-col">
          <GraphicsToolbar />
          <Viewport />
          <MessagesPanel />
        </div>
        <ContextMenu />
        <Tooltip />
      </main>
    </div>
  );
}
